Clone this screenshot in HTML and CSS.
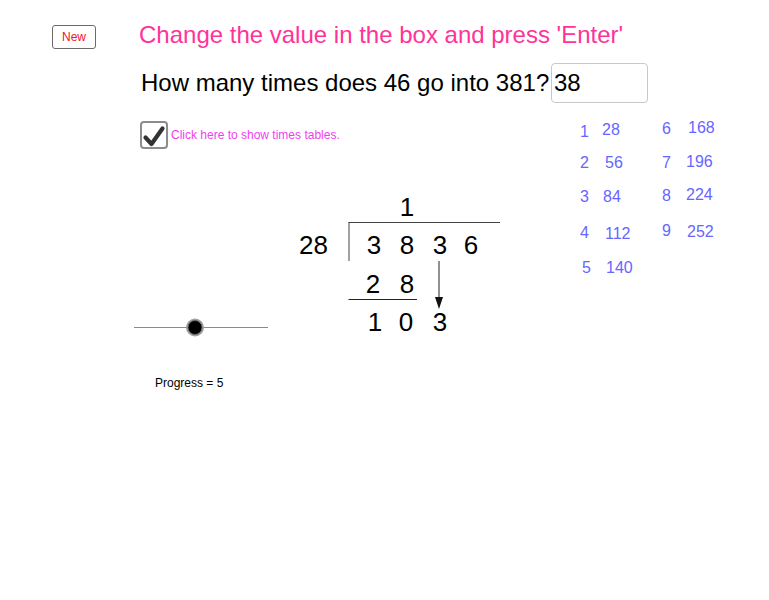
FILE: index.html
```html
<!DOCTYPE html>
<html>
<head>
<meta charset="utf-8">
<link rel="stylesheet" href="styles.css">
</head>
<body>
<div class="stage">
  <svg class="lines" width="769" height="600" viewBox="0 0 769 600">
    <line x1="348.5" y1="222.5" x2="500" y2="222.5" stroke="#444" stroke-width="1"/>
    <line x1="349" y1="222" x2="349" y2="261" stroke="#444" stroke-width="1"/>
    <line x1="348.5" y1="299.5" x2="417" y2="299.5" stroke="#222" stroke-width="1"/>
    <line x1="439" y1="261" x2="439" y2="300" stroke="#222" stroke-width="1"/>
    <polygon points="435,297 443,297 439,309" fill="#111"/>
    <line x1="134" y1="327.5" x2="268" y2="327.5" stroke="#8a8a8a" stroke-width="1"/>
    <circle cx="195" cy="327.5" r="9" fill="#a0a0a0"/>
    <circle cx="195" cy="327.5" r="7" fill="#000" stroke="#666" stroke-width="1"/>
  </svg>

  <button class="btn-new">New</button>
  <div class="title">Change the value in the box and press 'Enter'</div>
  <div class="question">How many times does 46 go into 381?</div>
  <div class="answer-box"><span class="answer">38</span></div>

  <div class="check">
    <svg width="26" height="26" viewBox="0 0 26 26">
      <path d="M4.5 15.5 L10.5 22 L21.5 6.5" fill="none" stroke="#333" stroke-width="4.2" stroke-linecap="round" stroke-linejoin="round"/>
    </svg>
  </div>
  <div class="check-label">Click here to show times tables.</div>

  <div class="d d-q1">1</div>
  <div class="divisor">28</div>
  <div class="d d-a1">3</div>
  <div class="d d-a2">8</div>
  <div class="d d-a3">3</div>
  <div class="d d-a4">6</div>
  <div class="d d-s1">2</div>
  <div class="d d-s2">8</div>
  <div class="d d-r1">1</div>
  <div class="d d-r2">0</div>
  <div class="d d-r3">3</div>

  <div class="t t1n">1</div><div class="t t1v">28</div>
  <div class="t t2n">2</div><div class="t t2v">56</div>
  <div class="t t3n">3</div><div class="t t3v">84</div>
  <div class="t t4n">4</div><div class="t t4v">112</div>
  <div class="t t5n">5</div><div class="t t5v">140</div>
  <div class="t t6n">6</div><div class="t t6v">168</div>
  <div class="t t7n">7</div><div class="t t7v">196</div>
  <div class="t t8n">8</div><div class="t t8v">224</div>
  <div class="t t9n">9</div><div class="t t9v">252</div>

  <div class="progress">Progress = 5</div>
</div>
</body>
</html>
```
FILE: styles.css
```css
html, body {
  margin: 0;
  padding: 0;
  background: #fff;
}
body {
  font-family: "Liberation Sans", Arial, sans-serif;
}
.stage {
  position: relative;
  width: 769px;
  height: 600px;
  overflow: hidden;
  background: #fff;
}
.stage > div,
.stage > button {
  position: absolute;
  line-height: 1;
  white-space: nowrap;
}
.lines {
  position: absolute;
  left: 0;
  top: 0;
}
.btn-new {
  left: 52px;
  top: 25px;
  width: 44px;
  height: 24px;
  box-sizing: border-box;
  border: 1.5px solid #6b6b6b;
  border-radius: 3px;
  background: #fff;
  color: #f5102e;
  font-family: "Liberation Sans", Arial, sans-serif;
  font-size: 12px;
  padding: 0;
  line-height: 20px;
  text-align: center;
}
.title {
  left: 139px;
  top: 23px;
  font-size: 24px;
  color: #ff3399;
}
.question {
  left: 141px;
  top: 71px;
  font-size: 24px;
  color: #000;
}
.answer-box {
  left: 551px;
  top: 63px;
  width: 97px;
  height: 40px;
  box-sizing: border-box;
  border: 1px solid #c8c8c8;
  border-radius: 4px;
  background: #fff;
}
.answer {
  position: absolute;
  left: 2px;
  top: 7px;
  font-size: 24px;
  line-height: 1;
  color: #000;
}
.check {
  left: 140px;
  top: 121px;
  width: 28px;
  height: 28px;
  box-sizing: border-box;
  border: 2px solid #8c8c8c;
  border-radius: 4px;
  background: #fff;
}
.check svg {
  position: absolute;
  left: -1px;
  top: -1px;
}
.check-label {
  left: 171px;
  top: 129px;
  font-size: 12px;
  color: #f03ef0;
}
.divisor {
  left: 299px;
  top: 232px;
  font-size: 26px;
  color: #000;
}
.d {
  width: 22px;
  text-align: center;
  font-size: 26px;
  color: #000;
}
.d-q1 { left: 396px; top: 194px; }
.d-a1 { left: 363px; top: 232px; }
.d-a2 { left: 396px; top: 232px; }
.d-a3 { left: 429px; top: 232px; }
.d-a4 { left: 460px; top: 232px; }
.d-s1 { left: 362px; top: 271px; }
.d-s2 { left: 396px; top: 271px; }
.d-r1 { left: 364px; top: 309px; }
.d-r2 { left: 395px; top: 309px; }
.d-r3 { left: 429px; top: 309px; }

.t {
  font-size: 16px;
  color: #6666ff;
}
.t1n { left: 580px; top: 124px; }
.t1v { left: 602px; top: 122px; }
.t2n { left: 580px; top: 155px; }
.t2v { left: 605px; top: 155px; }
.t3n { left: 580px; top: 189px; }
.t3v { left: 603px; top: 189px; }
.t4n { left: 580px; top: 225px; }
.t4v { left: 605px; top: 226px; }
.t5n { left: 582px; top: 260px; }
.t5v { left: 606px; top: 260px; }
.t6n { left: 662px; top: 121px; }
.t6v { left: 688px; top: 120px; }
.t7n { left: 662px; top: 155px; }
.t7v { left: 686px; top: 154px; }
.t8n { left: 662px; top: 188px; }
.t8v { left: 686px; top: 187px; }
.t9n { left: 662px; top: 223px; }
.t9v { left: 687px; top: 224px; }

.progress {
  left: 155px;
  top: 377px;
  font-size: 12px;
  color: #000;
}
```
